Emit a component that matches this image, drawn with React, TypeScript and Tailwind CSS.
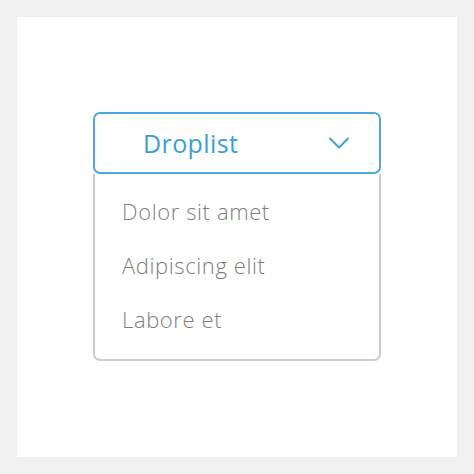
import { ChevronDown } from "lucide-react"

const options = ["Dolor sit amet", "Adipiscing elit", "Labore et"]

export default function App() {
  return (
    <div className="w-[474px] h-[474px] bg-[#f0f0f0] p-[17px] [font-family:'Open_Sans',sans-serif]">
      <div className="w-full h-full bg-white pt-[95px] pl-[76px]">
        <div className="w-[288px]">
          <button className="w-full h-[62px] flex items-center justify-between pl-[48px] pr-[22px] border-2 border-[#4fa8dc] rounded-[7px] bg-white">
            <span className="text-[25px] font-medium tracking-[0.4px] text-[#3a9ed8] leading-none">Droplist</span>
            <ChevronDown className="w-[36px] h-[36px] text-[#3a9ed8]" strokeWidth={1.3} />
          </button>
          <ul className="h-[187px] border-2 border-t-0 border-[#cccccc] rounded-b-[7px] pt-[10px] pl-[27px]">
            {options.map((o) => (
              <li key={o} className="h-[54px] flex items-center text-[22px] font-light tracking-[0.6px] text-[#7d7d7d]">
                {o}
              </li>
            ))}
          </ul>
        </div>
      </div>
    </div>
  )
}
